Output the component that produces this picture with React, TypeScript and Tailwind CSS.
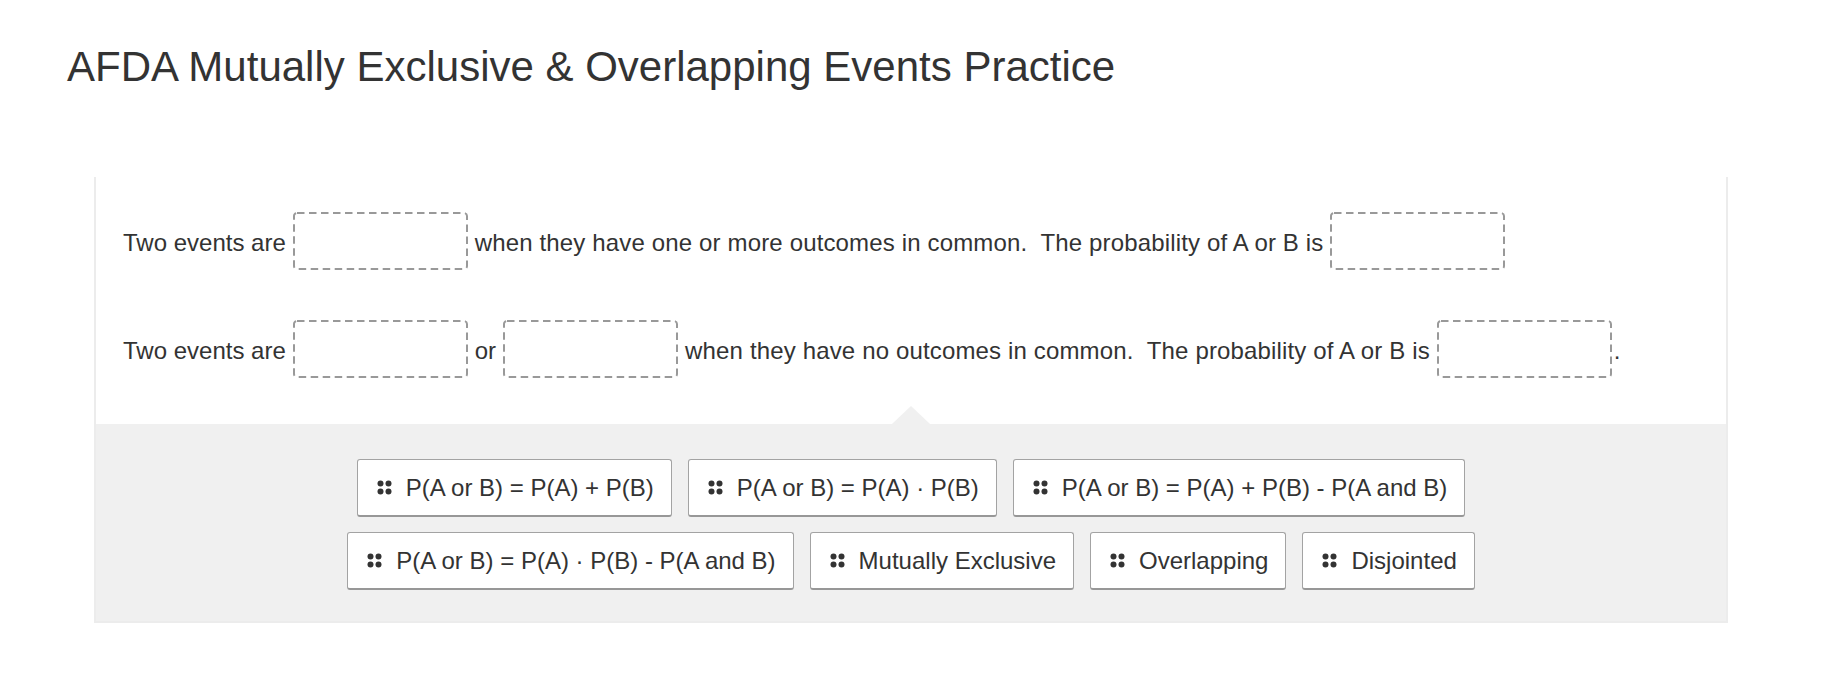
import React from "react";

function Blank() {
  return (
    <svg width="175" height="58" viewBox="0 0 175 58" className="block shrink-0">
      <rect x="1" y="1" width="173" height="56" rx="3" fill="none" stroke="#999999" strokeWidth="2" strokeDasharray="7.5 4.5" />
    </svg>
  );
}

function Grip() {
  return (
    <svg width="15" height="15" viewBox="0 0 15 15" className="shrink-0">
      <circle cx="3.5" cy="3.5" r="3" fill="#333" />
      <circle cx="11.5" cy="3.5" r="3" fill="#333" />
      <circle cx="3.5" cy="11.5" r="3" fill="#333" />
      <circle cx="11.5" cy="11.5" r="3" fill="#333" />
    </svg>
  );
}

function Chip({ label }: { label: string }) {
  return (
    <div className="h-[58px] flex items-center gap-[14px] pl-[19px] pr-[17px] bg-white border border-[#a3a3a3] border-b-2 border-b-[#979797] rounded-[3px] text-[24px] leading-[28px] whitespace-nowrap">
      <Grip />
      <span>{label}</span>
    </div>
  );
}

function T({ children }: { children: React.ReactNode }) {
  return <span className="pt-[3px]">{children}</span>;
}

function L({ children }: { children: React.ReactNode }) {
  return <span className="pt-[3px] tracking-[0.15px]">{children}</span>;
}

export default function App() {
  return (
    <div className="w-[1828px] h-[678px] bg-white text-[#333333] font-['Liberation_Sans',Arial,sans-serif] overflow-hidden">
      <h1 className="pl-[67px] pt-[44px] text-[42px] leading-[46px] font-normal whitespace-nowrap">
        AFDA Mutually Exclusive &amp; Overlapping Events Practice
      </h1>
      <div className="ml-[94px] mt-[87px] w-[1634px] border-x-2 border-b-2 border-[#ececec]">
        <div className="px-[27px] pt-[35px] pb-[46px] text-[24px] leading-[28px]">
          <div className="flex items-center gap-[7px] h-[58px] whitespace-nowrap">
            <T>Two events are</T>
            <Blank />
            <L>when they have one or more outcomes in common.{"\u00a0 "}The probability of A or B is</L>
            <Blank />
          </div>
          <div className="flex items-center gap-[7px] h-[58px] mt-[50px] whitespace-nowrap">
            <T>Two events are</T>
            <Blank />
            <T>or</T>
            <Blank />
            <L>when they have no outcomes in common.{"\u00a0 "}The probability of A or B is</L>
            <div className="flex items-center gap-[2px]">
              <Blank />
              <T>.</T>
            </div>
          </div>
        </div>
        <div className="relative bg-[#f0f0f0] pt-[35px] pb-[31px] flex flex-col items-center gap-[15px]">
          <div className="absolute left-1/2 -top-[18px] -ml-[19px] w-0 h-0 border-l-[19px] border-r-[19px] border-b-[18px] border-l-transparent border-r-transparent border-b-[#f0f0f0]" />
          <div className="flex gap-4">
            <Chip label="P(A or B) = P(A) + P(B)" />
            <Chip label="P(A or B) = P(A) · P(B)" />
            <Chip label="P(A or B) = P(A) + P(B) - P(A and B)" />
          </div>
          <div className="flex gap-4">
            <Chip label="P(A or B) = P(A) · P(B) - P(A and B)" />
            <Chip label="Mutually Exclusive" />
            <Chip label="Overlapping" />
            <Chip label="Disjointed" />
          </div>
        </div>
      </div>
    </div>
  );
}
